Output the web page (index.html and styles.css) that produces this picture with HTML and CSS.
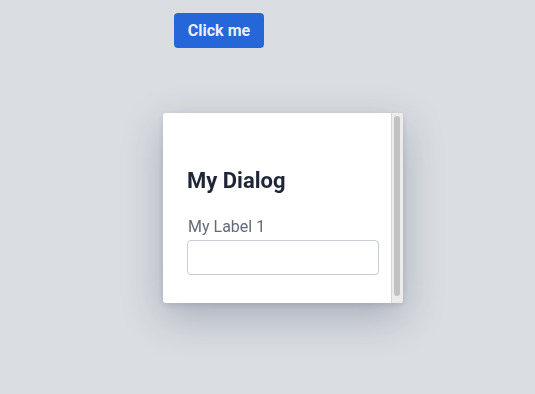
FILE: index.html
```html
<!DOCTYPE html>
<html lang="en">
<head>
<meta charset="utf-8">
<title>Dialog</title>
<link rel="stylesheet" href="styles.css">
</head>
<body>
  <div class="toolbar">
    <button class="btn-primary" type="button">Click me</button>
  </div>
  <div class="dialog" role="dialog" aria-labelledby="dlg-title">
    <div class="dialog-body">
      <h2 class="dialog-title" id="dlg-title">My Dialog</h2>
      <label class="field-label" for="f1">My Label 1</label>
      <input class="field-input" id="f1" type="text">
    </div>
    <div class="scrollbar"><div class="scrollbar-thumb"></div></div>
  </div>
</body>
</html>
```
FILE: styles.css
```css
html, body {
  margin: 0;
  padding: 0;
  height: 100%;
}
body {
  background: #dadde2;
  font-family: Roboto, "Liberation Sans", sans-serif;
  overflow: hidden;
}
.toolbar {
  padding: 13px 0 0 174px;
}
.btn-primary {
  display: block;
  width: 90px;
  height: 35px;
  padding: 0;
  border: none;
  border-radius: 4px;
  background: #2566d8;
  color: #e9eefa;
  font-family: Roboto, "Liberation Sans", sans-serif;
  font-size: 16px;
  font-weight: 700;
}
.dialog {
  position: fixed;
  left: 163px;
  top: 113px;
  width: 240px;
  height: 190px;
  display: flex;
  background: #ffffff;
  border-radius: 3px;
  overflow: hidden;
  box-shadow: 0 14px 40px rgba(40, 52, 80, 0.28), 0 2px 6px rgba(30, 41, 70, 0.12);
}
.dialog-body {
  flex: 1;
  display: flex;
  flex-direction: column;
  align-items: flex-start;
  padding: 55px 12px 0 24px;
}
.dialog-title {
  flex-shrink: 0;
  margin: 0 0 27px;
  font-size: 22px;
  font-weight: 700;
  line-height: 26px;
  color: #1e2638;
}
.field-label {
  flex-shrink: 0;
  display: block;
  font-size: 16px;
  line-height: 19px;
  margin-top: -4px;
  margin-bottom: 4px;
  color: #636b7a;
  padding-left: 1px;
}
.field-input {
  flex-shrink: 0;
  box-sizing: border-box;
  width: 192px;
  height: 35px;
  margin: 0;
  border: 1px solid #c8ccd4;
  border-radius: 4px;
  background: #fff;
}
.scrollbar {
  width: 11px;
  border-left: 1px solid #d6d6d6;
  background: #ececec;
  padding: 3px 3px 7px 2px;
  box-sizing: content-box;
  display: flex;
}
.scrollbar-thumb {
  flex: 1;
  background: #c1c1c1;
  border-radius: 4px;
}
```
